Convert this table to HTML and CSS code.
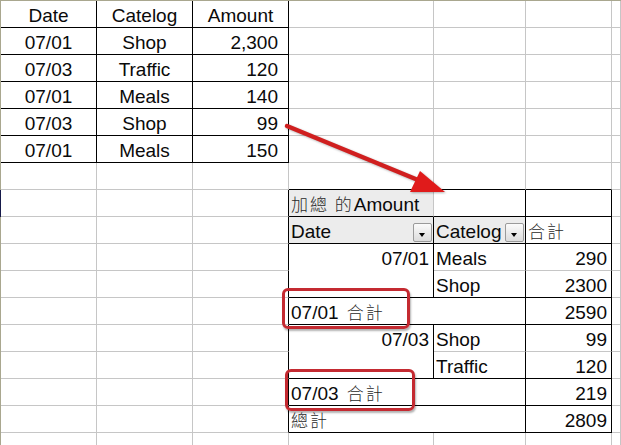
FILE: index.html
```html
<!DOCTYPE html>
<html lang="zh-Hant">
<head>
<meta charset="utf-8">
<title>Pivot</title>
<link rel="stylesheet" href="styles.css">
</head>
<body>
<div class="page">
  <div class="sheet">
    <!-- row 1 -->
    <div class="cell c kr kb">Date</div><div class="cell c kr kb">Catelog</div><div class="cell c kr kb">Amount</div><div class="cell"></div><div class="cell"></div><div class="cell"></div><div class="cell"></div>
    <!-- row 2 -->
    <div class="cell c kr kb">07/01</div><div class="cell c kr kb">Shop</div><div class="cell r amt kr kb">2,300</div><div class="cell"></div><div class="cell"></div><div class="cell"></div><div class="cell"></div>
    <!-- row 3 -->
    <div class="cell c kr kb">07/03</div><div class="cell c kr kb">Traffic</div><div class="cell r amt kr kb">120</div><div class="cell"></div><div class="cell"></div><div class="cell"></div><div class="cell"></div>
    <!-- row 4 -->
    <div class="cell c kr kb">07/01</div><div class="cell c kr kb">Meals</div><div class="cell r amt kr kb">140</div><div class="cell"></div><div class="cell"></div><div class="cell"></div><div class="cell"></div>
    <!-- row 5 -->
    <div class="cell c kr kb">07/03</div><div class="cell c kr kb">Shop</div><div class="cell r amt kr kb">99</div><div class="cell"></div><div class="cell"></div><div class="cell"></div><div class="cell"></div>
    <!-- row 6 -->
    <div class="cell c kr kb">07/01</div><div class="cell c kr kb">Meals</div><div class="cell r amt kr kb">150</div><div class="cell"></div><div class="cell"></div><div class="cell"></div><div class="cell"></div>
    <!-- row 7 -->
    <div class="cell"></div><div class="cell"></div><div class="cell"></div><div class="cell kb"></div><div class="cell kb"></div><div class="cell kb"></div><div class="cell"></div>
    <!-- row 8 -->
    <div class="cell sel"></div><div class="cell"></div><div class="cell kr"></div><div class="cell hd kb"><span class="cj">加總 的</span>Amount</div><div class="cell kr kb"></div><div class="cell kr kb"></div><div class="cell"></div>
    <!-- row 9 -->
    <div class="cell"></div><div class="cell"></div><div class="cell kr"></div><div class="cell hd dd kr kb">Date<span class="btn"></span></div><div class="cell hd dd kr kb">Catelog<span class="btn"></span></div><div class="cell kr kb"><span class="cj">合計</span></div><div class="cell"></div>
    <!-- row 10 -->
    <div class="cell"></div><div class="cell"></div><div class="cell kr"></div><div class="cell r pv rows2 kr kb">07/01</div><div class="cell kr">Meals</div><div class="cell r pv kr">290</div><div class="cell"></div>
    <!-- row 11 -->
    <div class="cell"></div><div class="cell"></div><div class="cell kr"></div><div class="cell kr kb">Shop</div><div class="cell r pv kr kb">2300</div><div class="cell"></div>
    <!-- row 12 -->
    <div class="cell"></div><div class="cell"></div><div class="cell kr"></div><div class="cell cols2 kr kb">07/01 <span class="cj gap">合計</span></div><div class="cell r pv kr kb">2590</div><div class="cell"></div>
    <!-- row 13 -->
    <div class="cell"></div><div class="cell"></div><div class="cell kr"></div><div class="cell r pv rows2 kr kb">07/03</div><div class="cell kr">Shop</div><div class="cell r pv kr">99</div><div class="cell"></div>
    <!-- row 14 -->
    <div class="cell"></div><div class="cell"></div><div class="cell kr"></div><div class="cell kr kb">Traffic</div><div class="cell r pv kr kb">120</div><div class="cell"></div>
    <!-- row 15 -->
    <div class="cell"></div><div class="cell"></div><div class="cell kr"></div><div class="cell cols2 kr kb">07/03 <span class="cj gap">合計</span></div><div class="cell r pv kr kb">219</div><div class="cell"></div>
    <!-- row 16 -->
    <div class="cell"></div><div class="cell"></div><div class="cell kr"></div><div class="cell cols2 kr kb"><span class="cj">總計</span></div><div class="cell r pv kr kb">2809</div><div class="cell"></div>
    <!-- row 17 (partial) -->
    <div class="cell end"></div><div class="cell end"></div><div class="cell end"></div><div class="cell end"></div><div class="cell end"></div><div class="cell end"></div><div class="cell end"></div>
  </div>

  <svg class="arrow" width="621" height="445" viewBox="0 0 621 445" aria-hidden="true">
    <line x1="287" y1="126" x2="418" y2="180" stroke="#d01f1f" stroke-width="4.5" stroke-linecap="round"/>
    <polygon points="420,171 445,192 410,192" fill="#e01b1b"/>
  </svg>
  <div class="mark mark1"></div>
  <div class="mark mark2"></div>
</div>
</body>
</html>
```

FILE: styles.css
```css
html, body {
  margin: 0;
  padding: 0;
  background: #fff;
}

.page {
  position: relative;
  width: 621px;
  height: 445px;
  overflow: hidden;
  font-family: "Liberation Sans", "Noto Sans CJK TC", sans-serif;
  font-size: 19px;
  color: #0a0a0a;
}

.sheet {
  display: grid;
  grid-template-columns: 96px 96px 96px 145px 92px 86px 1fr;
  grid-template-rows: repeat(16, 27px) 1fr;
  height: 445px;
  box-sizing: border-box;
  border-top: 1px solid #a9a78f;
  border-left: 1px solid #a9a78f;
}

.cell {
  box-sizing: border-box;
  border-right: 1px solid #c6c6c6;
  border-bottom: 1px solid #c6c6c6;
  padding: 3px 2px 0 2px;
  line-height: 23px;
  white-space: nowrap;
  overflow: hidden;
}

.cell.end {
  border-bottom: none;
}

.kr { border-right-color: #000; }
.kb { border-bottom-color: #000; }

.c { text-align: center; }
.r { text-align: right; }
.amt { padding-right: 10px; }
.pv { padding-right: 4px; }

.rows2 { grid-row: span 2; }
.cols2 { grid-column: span 2; }

.hd { background: #ececec; }

.sel { box-shadow: -1px 0 0 #161a4a; }

.cj {
  font-family: "Noto Sans CJK TC", sans-serif;
  font-size: 17px;
  font-weight: 300;
  letter-spacing: 2px;
  line-height: 1;
  color: #2a2a2a;
}

.gap { margin-left: 3px; }

.dd { position: relative; }

.btn {
  position: absolute;
  right: 1px;
  bottom: 1px;
  width: 19px;
  height: 19px;
  box-sizing: border-box;
  border: 1px solid #9a9a9a;
  border-radius: 2px;
  background: linear-gradient(#fbfbfb, #dcdcdc);
}

.btn::after {
  content: "";
  position: absolute;
  left: 5px;
  top: 9px;
  border-left: 3.5px solid transparent;
  border-right: 3.5px solid transparent;
  border-top: 4px solid #000;
}

.arrow {
  position: absolute;
  left: 0;
  top: 0;
  pointer-events: none;
  filter: drop-shadow(1px 1px 1px rgba(0, 0, 0, 0.3));
}

.mark {
  position: absolute;
  box-sizing: border-box;
  border: 3px solid #c42a31;
  border-radius: 6px;
  box-shadow: 1px 2px 2px rgba(0, 0, 0, 0.3);
  pointer-events: none;
}

.mark1 {
  left: 282px;
  top: 288px;
  width: 128px;
  height: 41px;
}

.mark2 {
  left: 285px;
  top: 369px;
  width: 130px;
  height: 42px;
}
```
